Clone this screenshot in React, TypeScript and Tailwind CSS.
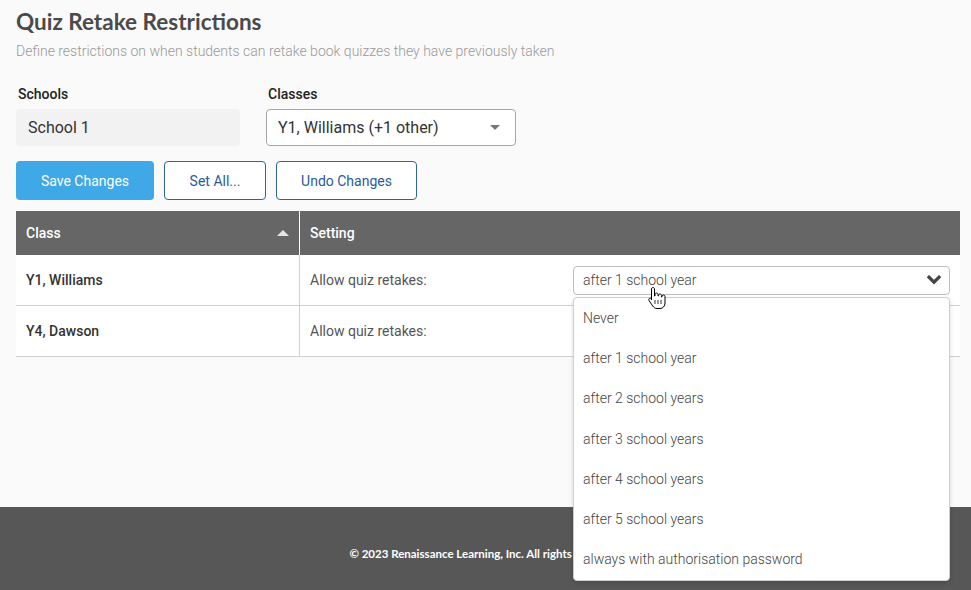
const options = [
  "Never",
  "after 1 school year",
  "after 2 school years",
  "after 3 school years",
  "after 4 school years",
  "after 5 school years",
  "always with authorisation password",
];

const HandCursor = () => (
  <svg width="20" height="25" viewBox="0 0 20 25" className="absolute left-[74px] top-[20px] z-20">
    <path
      d="M6 1.5c.8 0 1.5.7 1.5 1.5v7h.5V8.5c0-.8.7-1.5 1.5-1.5s1.5.7 1.5 1.5V10h.5V9.5c0-.8.7-1.5 1.5-1.5s1.5.7 1.5 1.5V11h.5v-.5c0-.8.7-1.5 1.5-1.5s1.5.7 1.5 1.5V17c0 3-2 5.5-5 5.5H10c-2 0-3.2-1-4.3-2.5L2 14.5c-.5-.8-.3-1.7.4-2.1.7-.4 1.5-.2 2 .4L4.5 14V3c0-.8.7-1.5 1.5-1.5z"
      fill="white"
      stroke="black"
      strokeWidth="1"
    />
    <path d="M8 14v4M11 14v4M14 14v4" stroke="black" strokeWidth="0.8" />
  </svg>
);

const Chevron = () => (
  <svg width="14" height="10" viewBox="0 0 14 10">
    <path d="M2 2.2l5 5 5-5" fill="none" stroke="#454545" strokeWidth="3.2" strokeLinecap="square" />
  </svg>
);

const App = () => {
  return (
    <div className="min-h-[590px] bg-[#fafafa] flex flex-col font-['Roboto',sans-serif]">
      <main className="px-4 pt-[8px] h-[507px]">
        <h1 className="font-['Lato',sans-serif] font-bold text-[22.5px] leading-[28px] text-[#4a4a4a]">
          Quiz Retake Restrictions
        </h1>
        <p className="mt-[5px] text-sm leading-5 font-light text-[#999]">
          Define restrictions on when students can retake book quizzes they have previously taken
        </p>

        <div className="mt-[23px] flex gap-[26px]">
          <div className="w-[224px]">
            <div className="text-sm leading-5 font-medium text-[#222] pl-[2px]">Schools</div>
            <div className="mt-[5px] h-[37px] rounded bg-[#f2f2f2] flex items-center px-3 text-base text-[#333]">
              School 1
            </div>
          </div>
          <div className="w-[250px]">
            <div className="text-sm leading-5 font-medium text-[#222] pl-[2px]">Classes</div>
            <div className="mt-[5px] h-[37px] rounded border border-[#a6a6a6] bg-white flex items-center justify-between pl-[11px] pr-[15px] text-base text-[#333]">
              <span>Y1, Williams (+1 other)</span>
              <span className="w-0 h-0 border-l-[5px] border-r-[5px] border-t-[5px] border-l-transparent border-r-transparent border-t-[#777]" />
            </div>
          </div>
        </div>

        <div className="mt-[15px] flex gap-[10px]">
          <button className="h-[39px] w-[138px] rounded-sm bg-[#3fa8e7] text-white text-sm">
            Save Changes
          </button>
          <button className="h-[39px] w-[102px] rounded-sm border border-[#2f62a8] bg-white text-[#2d5a99] text-sm">
            Set All...
          </button>
          <button className="h-[39px] w-[141px] rounded-sm border border-[#2f62a8] bg-white text-[#2d5a99] text-sm">
            Undo Changes
          </button>
        </div>

        <div className="mt-[11px] w-[944px]">
          <div className="flex h-[44px] bg-[#666666] text-white text-sm font-medium">
            <div className="w-[284px] flex items-center justify-between pl-[10px] pr-[10px] border-r border-white">
              <span>Class</span>
              <span className="w-0 h-0 border-l-[6px] border-r-[6px] border-b-[6px] border-l-transparent border-r-transparent border-b-[#e5e5e5]" />
            </div>
            <div className="flex-1 flex items-center pl-[10px]">Setting</div>
          </div>

          <div className="flex h-[51px] bg-white border-b border-[#d0d0d0] text-sm">
            <div className="w-[284px] flex items-center pl-[10px] border-r border-[#d0d0d0] font-medium text-[#333]">
              Y1, Williams
            </div>
            <div className="flex-1 flex items-center justify-between pl-[10px] pr-[10px] text-[#555]">
              <span>Allow quiz retakes:</span>
              <div className="relative w-[377px]">
                <div className="h-[29px] rounded border border-[#bdbdbd] bg-white flex items-center justify-between pl-[9px] pr-[8px] font-light text-[#444]">
                  <span>after 1 school year</span>
                  <Chevron />
                </div>
                <HandCursor />
                <div className="absolute left-0 right-0 top-full mt-[2px] z-10 bg-white border border-[#cfcfcf] rounded shadow-[0_2px_4px_rgba(0,0,0,0.15)]">
                  {options.map((o) => (
                    <div key={o} className="h-[40.3px] flex items-center pl-[9px] text-sm font-light text-[#444]">
                      {o}
                    </div>
                  ))}
                </div>
              </div>
            </div>
          </div>

          <div className="flex h-[51px] bg-white border-b border-[#d0d0d0] text-sm">
            <div className="w-[284px] flex items-center pl-[10px] border-r border-[#d0d0d0] font-medium text-[#333]">
              Y4, Dawson
            </div>
            <div className="flex-1 flex items-center pl-[10px] text-[#555]">Allow quiz retakes:</div>
          </div>
        </div>
      </main>

      <footer className="h-[83px] bg-[#575757] flex justify-center pt-[38px]">
        <span className="font-['Lato',sans-serif] font-bold text-[11.5px] leading-[18px] text-white">
          © 2023 Renaissance Learning, Inc. All rights reserved.
        </span>
      </footer>
    </div>
  );
};

export default App;
